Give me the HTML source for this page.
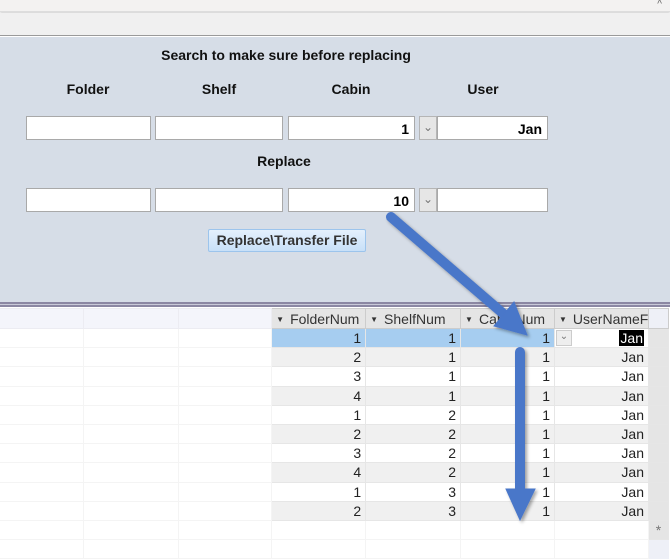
<!DOCTYPE html>
<html><head><meta charset="utf-8"><style>
*{margin:0;padding:0;box-sizing:border-box}
body{width:670px;height:557px;overflow:hidden;background:#fff;font-family:"Liberation Sans",Arial,sans-serif;position:relative}
.abs{position:absolute}
.lbl{position:absolute;font-weight:bold;font-size:14px;color:#111;transform:translateX(-50%);white-space:nowrap}
.inp{position:absolute;background:#fff;border:1px solid #a9a9a9;height:24px;font-weight:bold;font-size:14px;text-align:right;padding:4px 5px 0 0;color:#000}
.dd{position:absolute;width:18px;height:24px;background:#e6e6e6;border:1px solid #b5b5b5;color:#777;font-size:12px;text-align:center;line-height:20px}
table{position:absolute;left:-1px;top:308px;border-collapse:collapse;font-size:14px;color:#222}
td{height:19.2px;border:1px solid #e6e6e6;padding:0 4px;text-align:right;line-height:18px}
td.e{border-color:#f4f4f4}
th{height:20px;background:#f4f5fb;font-weight:normal;border:1px solid #ececf2;text-align:left;padding:0 4px;white-space:nowrap;color:#333}
th.h{background:#e5e5e5;border:1px solid #ccc}
.tri{font-size:8px;vertical-align:middle;margin-right:6px;color:#333}
</style></head><body>
<div class="abs" style="left:0;top:0;width:670px;height:12px;background:#f3f2f1;border-bottom:1px solid #ddd;box-shadow:0 1px 2px #ccc"></div>
<div class="abs" style="right:8px;top:-1px;font-size:10px;color:#666">^</div>
<div class="abs" style="left:0;top:13px;width:670px;height:23px;background:#f0f0f0;border-bottom:1px solid #9a9a9a"></div>
<div class="abs" style="left:0;top:37px;width:670px;height:266px;background:#d6dde7"></div>
<div class="abs" style="left:0;top:302px;width:670px;height:5px;border-top:2px solid #8b87a3;border-bottom:2px solid #8b87a3;background:#c9c9d8"></div>

<div class="lbl" style="left:286px;top:47px">Search to make sure before replacing</div>
<div class="lbl" style="left:88px;top:81px">Folder</div>
<div class="lbl" style="left:219px;top:81px">Shelf</div>
<div class="lbl" style="left:351px;top:81px">Cabin</div>
<div class="lbl" style="left:483px;top:81px">User</div>
<div class="inp" style="left:26px;top:116px;width:125px"></div>
<div class="inp" style="left:155px;top:116px;width:128px"></div>
<div class="inp" style="left:288px;top:116px;width:127px">1</div>
<div class="dd" style="left:419px;top:116px">&#8964;</div>
<div class="inp" style="left:437px;top:116px;width:111px">Jan</div>

<div class="lbl" style="left:284px;top:153px">Replace</div>
<div class="inp" style="left:26px;top:188px;width:125px"></div>
<div class="inp" style="left:155px;top:188px;width:128px"></div>
<div class="inp" style="left:288px;top:188px;width:127px">10</div>
<div class="dd" style="left:419px;top:188px">&#8964;</div>
<div class="inp" style="left:437px;top:188px;width:111px"></div>
<div class="abs" style="left:208px;top:229px;width:158px;height:23px;background:linear-gradient(#e4f0fc,#c8e0f8);border:1px solid #9cc4ec;border-radius:2px;font-weight:bold;font-size:14px;color:#333;text-align:center;line-height:21px">Replace\Transfer File</div>

<table>
<tr><th style="width:85px"></th><th style="width:95px"></th><th style="width:94px"></th>
<th class="h" style="width:94px"><span class="tri">▼</span>FolderNum</th>
<th class="h" style="width:95px"><span class="tri">▼</span>ShelfNum</th>
<th class="h" style="width:94px"><span class="tri">▼</span>CabinNum</th>
<th class="h" style="width:94px;overflow:hidden;max-width:94px"><span class="tri">▼</span>UserNameF</th>
<th class="h" style="width:20px;background:#eef0f7"></th></tr>
<tr style="background:#a6cdf0"><td class="e" style="background:#fff"></td><td class="e" style="background:#fff"></td><td class="e" style="background:#fff"></td><td>1</td><td>1</td><td>1</td><td style="background:#fff;position:relative"><span style="position:absolute;left:1px;top:1px;width:16px;height:16px;border:1px solid #ccc;background:#eee;font-size:10px;color:#777;text-align:center;line-height:12px">&#8964;</span><span style="background:#000;color:#fff;padding:0 1px">Jan</span></td><td style="background:#e5e5e5"></td></tr>
<tr style="background:#f0f0f0"><td class="e" style="background:#fff"></td><td class="e" style="background:#fff"></td><td class="e" style="background:#fff"></td><td>2</td><td>1</td><td>1</td><td>Jan</td><td style="background:#e5e5e5"></td></tr>
<tr><td class="e"></td><td class="e"></td><td class="e"></td><td>3</td><td>1</td><td>1</td><td>Jan</td><td style="background:#e5e5e5"></td></tr>
<tr style="background:#f0f0f0"><td class="e" style="background:#fff"></td><td class="e" style="background:#fff"></td><td class="e" style="background:#fff"></td><td>4</td><td>1</td><td>1</td><td>Jan</td><td style="background:#e5e5e5"></td></tr>
<tr><td class="e"></td><td class="e"></td><td class="e"></td><td>1</td><td>2</td><td>1</td><td>Jan</td><td style="background:#e5e5e5"></td></tr>
<tr style="background:#f0f0f0"><td class="e" style="background:#fff"></td><td class="e" style="background:#fff"></td><td class="e" style="background:#fff"></td><td>2</td><td>2</td><td>1</td><td>Jan</td><td style="background:#e5e5e5"></td></tr>
<tr><td class="e"></td><td class="e"></td><td class="e"></td><td>3</td><td>2</td><td>1</td><td>Jan</td><td style="background:#e5e5e5"></td></tr>
<tr style="background:#f0f0f0"><td class="e" style="background:#fff"></td><td class="e" style="background:#fff"></td><td class="e" style="background:#fff"></td><td>4</td><td>2</td><td>1</td><td>Jan</td><td style="background:#e5e5e5"></td></tr>
<tr><td class="e"></td><td class="e"></td><td class="e"></td><td>1</td><td>3</td><td>1</td><td>Jan</td><td style="background:#e5e5e5"></td></tr>
<tr style="background:#f0f0f0"><td class="e" style="background:#fff"></td><td class="e" style="background:#fff"></td><td class="e" style="background:#fff"></td><td>2</td><td>3</td><td>1</td><td>Jan</td><td style="background:#e5e5e5"></td></tr>
<tr><td class="e"></td><td class="e"></td><td class="e"></td><td class="e"></td><td class="e"></td><td class="e"></td><td class="e"></td><td style="background:#e5e5e5;text-align:center;color:#777">*</td></tr>
<tr><td class="e"></td><td class="e"></td><td class="e"></td><td class="e"></td><td class="e"></td><td class="e"></td><td class="e"></td><td style="background:#eef0f7;border-color:#eef0f7"></td></tr>
</table>

<svg class="abs" style="left:0;top:0" width="670" height="557">
<defs><filter id="s"><feDropShadow dx="2" dy="2" stdDeviation="1.5" flood-opacity="0.35"/></filter></defs>
<g fill="#4a77c9" stroke="#4a77c9" filter="url(#s)">
<line x1="391" y1="217" x2="506" y2="316" stroke-width="10" stroke-linecap="round"/>
<polygon points="527,335 494,326 514,302" stroke-width="1"/>
<line x1="520" y1="352" x2="520" y2="492" stroke-width="10" stroke-linecap="round"/>
<polygon points="506,489 535,489 520,520" stroke-width="1"/>
</g>
</svg>
</body></html>
